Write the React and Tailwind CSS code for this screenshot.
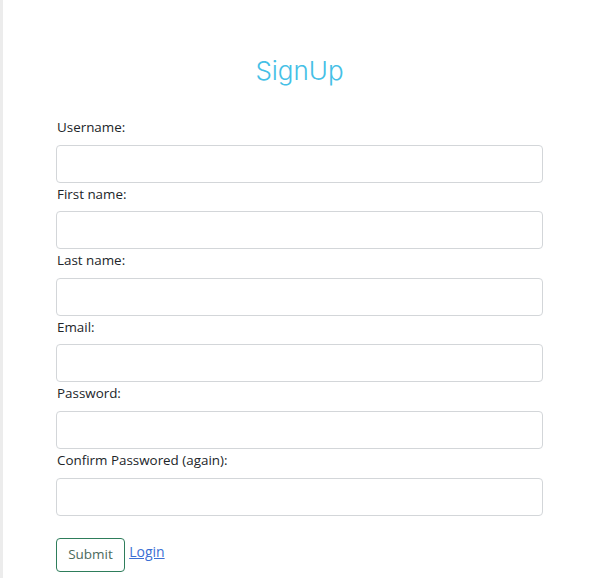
export default function App() {
  const fields = [
    "Username:",
    "First name:",
    "Last name:",
    "Email:",
    "Password:",
    "Confirm Passwored (again):",
  ];
  return (
    <div className="flex w-[594px] h-[578px] bg-white overflow-hidden" style={{ fontFamily: '"Open Sans", "Noto Sans", sans-serif' }}>
      <div className="w-[3px] shrink-0 bg-[#ececec]" />
      <div className="flex-1 pl-[53px] pr-[51px]">
        <h1
          className="mt-[51px] mb-[25px] text-center text-[26px] leading-[40px] font-light text-[#45c0e6]"
          style={{ fontFamily: 'Inter, "Noto Sans", sans-serif' }}
        >
          SignUp
        </h1>
        {fields.map((f) => (
          <div key={f}>
            <label className="block pl-[1px] pt-[1px] text-[13.4px] leading-[21.6px] mb-[6px] text-[#212529]">{f}</label>
            <input className="block w-full h-[38px] rounded-[4px] border border-[#d3d6d9] bg-white outline-none" />
          </div>
        ))}
        <div className="mt-[22px]">
          <button className="h-[34px] w-[69px] rounded-[4px] border border-[#2e7d5b] text-[13.5px] text-[#4b6a5c] bg-white">
            Submit
          </button>{" "}
          <a href="#" className="text-[14px] text-[#3b6fd4] underline relative top-[-2px]">Login</a>
        </div>
      </div>
    </div>
  );
}
